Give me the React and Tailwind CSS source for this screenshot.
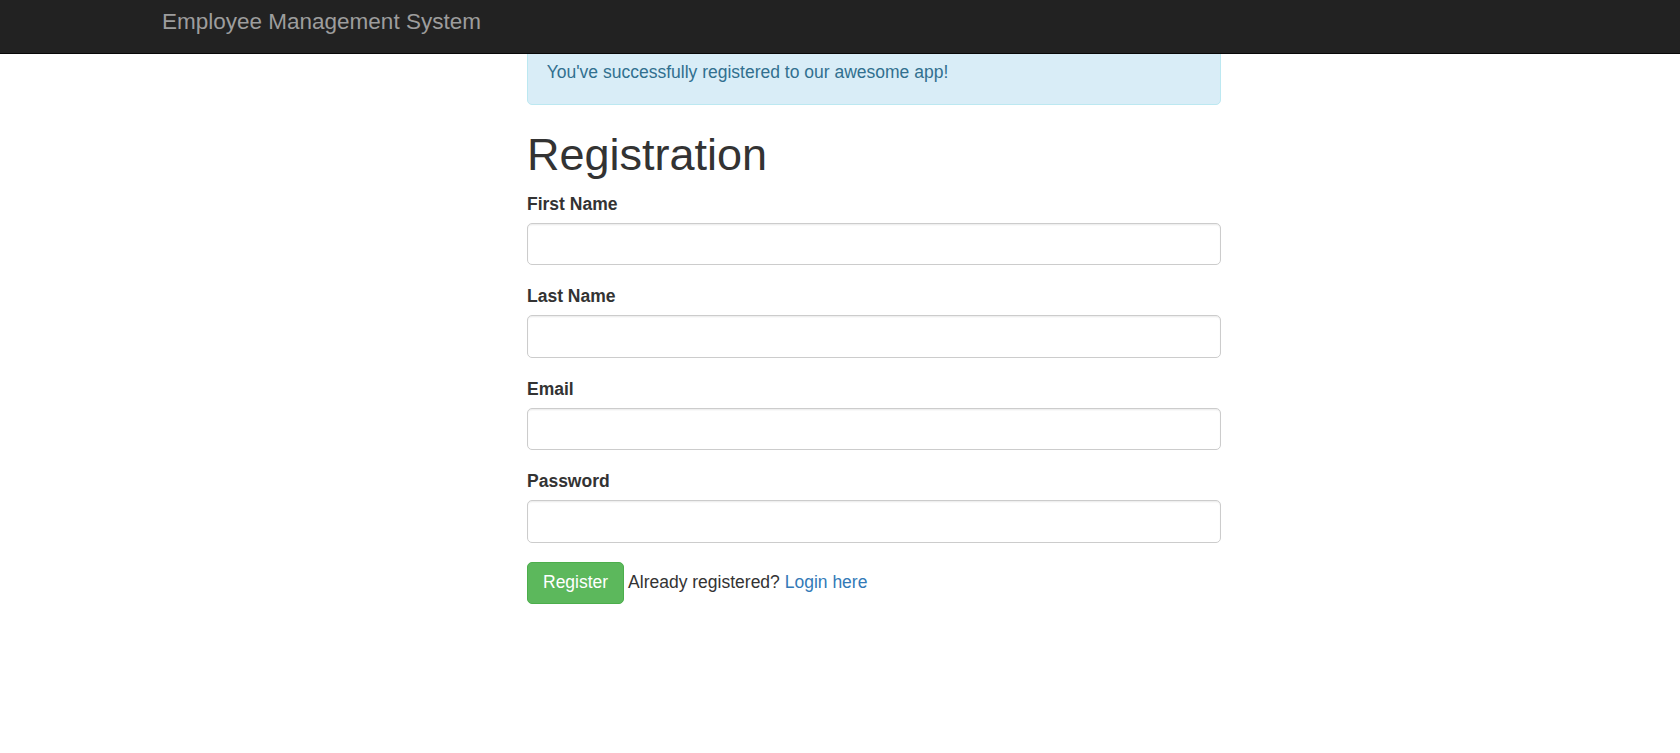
export default function App() {
  const fields = ["First Name", "Last Name", "Email", "Password"];

  return (
    <div className="min-h-[753px] bg-white text-[#333] text-[17.5px] leading-[25px] font-['Liberation_Sans',Arial,sans-serif]">
      {/* Navbar */}
      <nav className="relative z-10 h-[54px] bg-[#222] border-b-[1.25px] border-[#080808]">
        <div className="pl-[162px] pt-[9px]">
          <a href="#" className="text-[22.5px] leading-[25px] text-[#9d9d9d]">
            Employee Management System
          </a>
        </div>
      </nav>

      <div className="ml-[527px] w-[694px]">
        {/* Alert */}
        <div className="-mt-[14px] rounded-[5px] border-[1.25px] border-[#bce8f1] bg-[#d9edf7] p-[18.75px] text-[#31708f]">
          You've successfully registered to our awesome app!
        </div>

        <h1 className="mt-[25px] mb-[12.5px] text-[45px] leading-[49.5px] font-normal text-[#333]">
          Registration
        </h1>

        <form onSubmit={(e) => e.preventDefault()}>
          {fields.map((label) => (
            <div key={label} className="mb-[18.75px]">
              <label className="mb-[6.25px] block font-bold">{label}</label>
              <input
                type={label === "Password" ? "password" : label === "Email" ? "email" : "text"}
                className="block h-[42.5px] w-full rounded-[5px] border-[1.25px] border-[#ccc] bg-white px-[15px] py-[7.5px] text-[17.5px] text-[#555] shadow-[inset_0_1.25px_1.25px_rgba(0,0,0,0.075)] outline-none"
              />
            </div>
          ))}

          <div>
            <button
              type="submit"
              className="inline-block rounded-[5px] border-[1.25px] border-[#4cae4c] bg-[#5cb85c] px-[15px] py-[7.5px] align-middle text-[17.5px] leading-[25px] text-white"
            >
              Register
            </button>{" "}
            Already registered?{" "}
            <a href="#" className="text-[#337ab7]">
              Login here
            </a>
          </div>
        </form>
      </div>
    </div>
  );
}
